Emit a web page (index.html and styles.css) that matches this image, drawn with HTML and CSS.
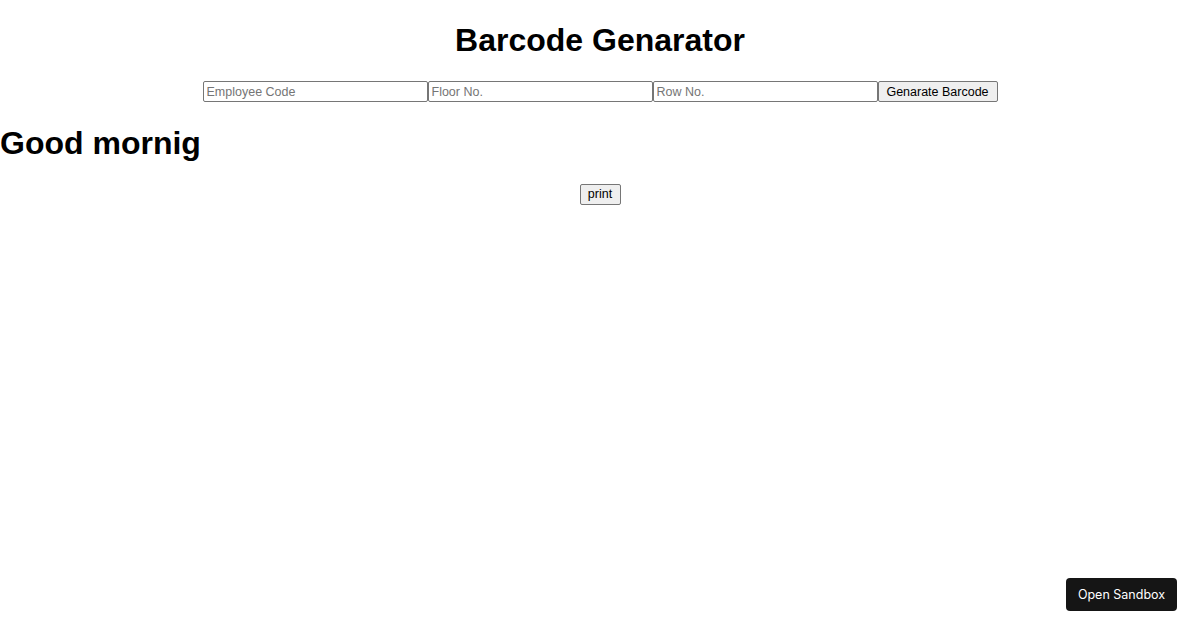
FILE: index.html
```html
<!DOCTYPE html>
<html lang="en">
<head>
  <meta charset="UTF-8">
  <meta name="viewport" content="width=device-width, initial-scale=1.0">
  <title>Barcode Genarator</title>
  <link rel="stylesheet" href="styles.css">
</head>
<body>
  <div class="app">
    <h1 class="title">Barcode Genarator</h1>
    <div class="form-row">
      <input type="text" class="field" placeholder="Employee Code">
      <input type="text" class="field" placeholder="Floor No.">
      <input type="text" class="field" placeholder="Row No.">
      <button class="btn gen-btn">Genarate Barcode</button>
    </div>
    <h1 class="greeting">Good mornig</h1>
    <div class="print-row">
      <button class="btn print-btn">print</button>
    </div>
  </div>
  <a class="sandbox-btn" href="#">Open Sandbox</a>
</body>
</html>
```

FILE: styles.css
```css
body {
  margin: 0;
  padding-top: 1px;
  font-family: 'Liberation Sans', Arial, sans-serif;
  background: #fff;
  color: #000;
}

h1 {
  font-size: 32px;
  font-weight: bold;
  margin: 21.44px 0;
  line-height: 37px;
}

.title {
  text-align: center;
}

.form-row {
  display: flex;
  justify-content: center;
  margin-top: 22px;
}

.field {
  width: 225px;
  height: 21px;
  box-sizing: border-box;
  margin: 0;
  padding: 1px 3px;
  border: 1px solid #767676;
  border-radius: 2px;
  font-family: 'Liberation Sans', Arial, sans-serif;
  font-size: 12.5px;
}

.field::placeholder {
  color: #757575;
}

.btn {
  height: 21px;
  box-sizing: border-box;
  margin: 0;
  padding: 1px 4px;
  background: #efefef;
  border: 1px solid #767676;
  border-radius: 2px;
  font-family: 'Liberation Sans', Arial, sans-serif;
  font-size: 12.5px;
  color: #000;
  white-space: nowrap;
}

.gen-btn {
  width: 120px;
}

.greeting {
  margin-top: 23px;
}

.print-row {
  text-align: center;
}

.print-btn {
  width: 41px;
}

.sandbox-btn {
  position: fixed;
  right: 23px;
  bottom: 19px;
  width: 111px;
  height: 33px;
  display: flex;
  align-items: center;
  justify-content: center;
  background: #151515;
  color: #fff;
  border-radius: 4px;
  font-family: Inter, 'Liberation Sans', sans-serif;
  font-size: 12.5px;
  text-decoration: none;
}
```
